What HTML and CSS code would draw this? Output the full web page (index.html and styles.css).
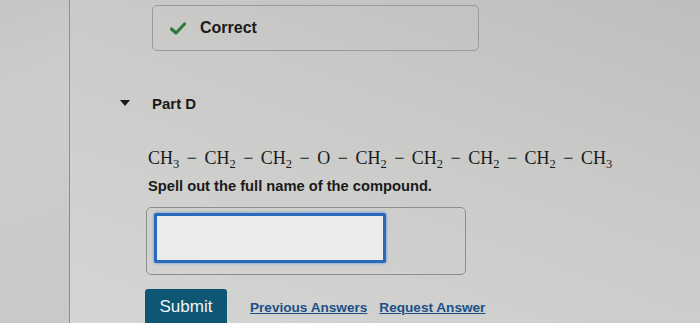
FILE: index.html
```html
<!DOCTYPE html>
<html lang="en">
<head>
<meta charset="UTF-8" />
<title>Part D</title>
<link rel="stylesheet" href="styles.css">
</head>
<body>
<div class="page">
  <div class="rail"></div>
  <div class="content">
    <div class="feedback">
      <svg class="check" width="16" height="13" viewBox="0 0 16 13">
        <path d="M1.5 7 L6 11 L14.5 2" fill="none" stroke="#2f7a3a" stroke-width="3.2" stroke-linecap="round" stroke-linejoin="round"/>
      </svg>
      <span>Correct</span>
    </div>

    <div class="part-head">
      <span class="caret"></span>
      <span class="part-title">Part D</span>
    </div>

    <div class="part-body">
      <div class="formula">CH<sub>3</sub> − CH<sub>2</sub> − CH<sub>2</sub> − O − CH<sub>2</sub> − CH<sub>2</sub> − CH<sub>2</sub> − CH<sub>2</sub> − CH<sub>3</sub></div>
      <p class="prompt">Spell out the full name of the compound.</p>

      <div class="answer-box">
        <input type="text" class="answer-input">
      </div>

      <div class="actions">
        <button class="submit-btn">Submit</button>
        <a href="#" class="link">Previous Answers</a>
        <a href="#" class="link">Request Answer</a>
      </div>
    </div>
  </div>
</div>
</body>
</html>
```

FILE: styles.css
```css
html, body { margin: 0; padding: 0; height: 100%; overflow: hidden; }
body {
  font-family: "Liberation Sans", Arial, sans-serif;
  background: linear-gradient(200deg, #bebebc 0%, #cacac8 40%, #d6d6d4 100%);
  color: #1a1a1a;
}
.page { display: flex; height: 323px; }
.rail {
  width: 69px;
  border-right: 1.5px solid #8b9096;
  background: linear-gradient(160deg, #c7c5c3 0%, #cfcdcb 30%, #c9c9c7 100%);
}
.content { flex: 1; }

.feedback {
  margin: 5px 0 0 82px;
  width: 327px; height: 46px;
  border: 1px solid #9a9a9a;
  border-radius: 5px;
  display: flex; align-items: center;
  padding-left: 17px;
  box-sizing: border-box;
  gap: 14px;
  font-weight: bold; font-size: 16px;
}
.check { margin-top: 1px; }

.part-head {
  display: flex; align-items: center;
  margin-top: 42px; margin-left: 50px;
  height: 20px;
}
.caret {
  width: 0; height: 0;
  border-left: 5px solid transparent;
  border-right: 5px solid transparent;
  border-top: 6px solid #1a1a1a;
}
.part-title {
  margin-left: 22px;
  font-weight: bold; font-size: 15px;
}

.part-body { margin-left: 78px; }
.formula {
  margin-top: 35px;
  font-family: "Liberation Serif", "Times New Roman", serif;
  font-size: 18px;
  word-spacing: 3px;
  white-space: nowrap;
}
.formula sub { font-size: 12.5px; vertical-align: -4px; line-height: 0; }
.prompt {
  margin: 9px 0 0;
  font-weight: bold; font-size: 14.7px;
}

.answer-box {
  margin: 13px 0 0 -2px;
  width: 320px; height: 68px;
  border: 1px solid #8e8e8e;
  border-radius: 5px;
  box-sizing: border-box;
  padding: 5px 0 0 7px;
}
.answer-input {
  width: 232px; height: 50px;
  box-sizing: border-box;
  border: 3px solid #2b69bd;
  border-radius: 2px;
  box-shadow: 0 0 3px #4b8ad6;
  background: #ececea;
  outline: none;
  margin: 0;
}

.actions {
  display: flex; align-items: center;
  margin-top: 14px;
}
.submit-btn {
  width: 82px; height: 36px;
  background: #0d5674;
  color: #f1f4f6;
  border: none; border-radius: 3px;
  font-family: "Liberation Sans", Arial, sans-serif;
  font-size: 17px;
  margin-left: -3px;
}
.link {
  color: #1b4f86;
  font-weight: bold; font-size: 13.6px;
  text-decoration: underline;
  margin-left: 23px;
}
.link + .link { margin-left: 12px; }
```
